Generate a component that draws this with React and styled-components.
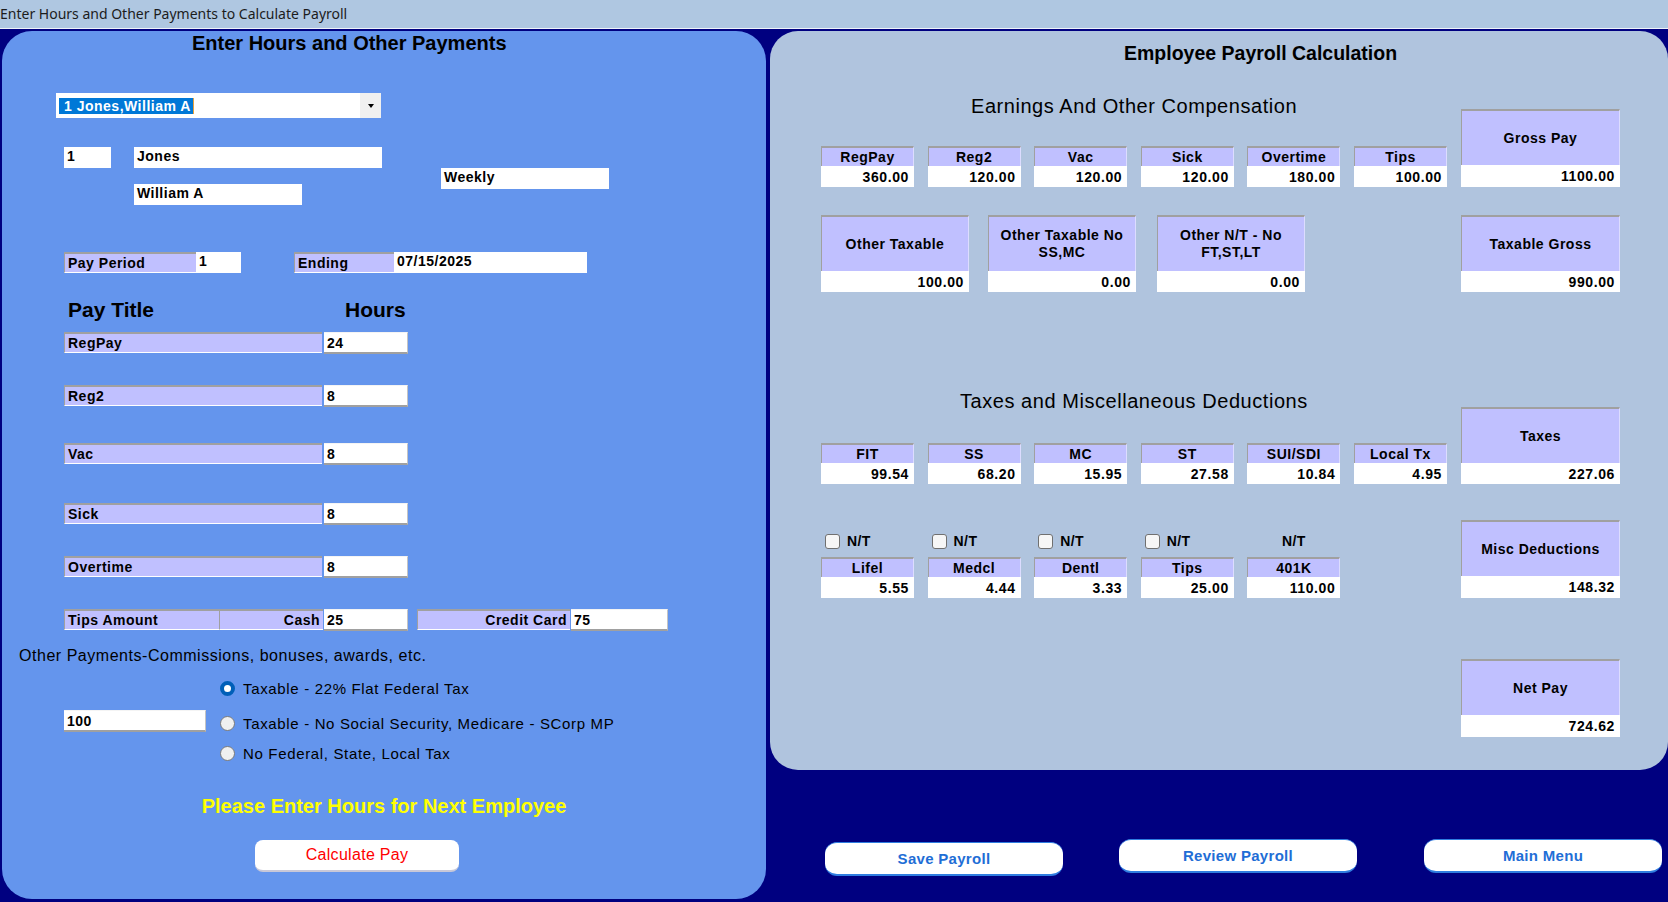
import React from "react";
import styled, { createGlobalStyle } from "styled-components";

const hourRows = [
  { title: "RegPay", hours: "24", mt: 9 },
  { title: "Reg2", hours: "8", mt: 31 },
  { title: "Vac", hours: "8", mt: 36 },
  { title: "Sick", hours: "8", mt: 38 },
  { title: "Overtime", hours: "8", mt: 31 },
];

const otherOptions = [
  { label: "Taxable - 22% Flat Federal Tax", checked: true, mt: 0 },
  { label: "Taxable - No Social Security, Medicare - SCorp MP", checked: false, mt: 15 },
  { label: "No Federal, State, Local Tax", checked: false, mt: 10 },
];

const earnings = [
  { title: "RegPay", value: "360.00" },
  { title: "Reg2", value: "120.00" },
  { title: "Vac", value: "120.00" },
  { title: "Sick", value: "120.00" },
  { title: "Overtime", value: "180.00" },
  { title: "Tips", value: "100.00" },
];

const otherPay = [
  { title: "Other Taxable", value: "100.00", gap: 0 },
  { title: <>Other Taxable No<br />SS,MC</>, value: "0.00", gap: 19 },
  { title: <>Other N/T - No<br />FT,ST,LT</>, value: "0.00", gap: 21 },
];

const taxes = [
  { title: "FIT", value: "99.54" },
  { title: "SS", value: "68.20" },
  { title: "MC", value: "15.95" },
  { title: "ST", value: "27.58" },
  { title: "SUI/SDI", value: "10.84" },
  { title: "Local Tx", value: "4.95" },
];

const deductions = [
  { title: "Lifel", value: "5.55", check: true },
  { title: "Medcl", value: "4.44", check: true },
  { title: "Dentl", value: "3.33", check: true },
  { title: "Tips", value: "25.00", check: true },
  { title: "401K", value: "110.00", check: false },
];

const GlobalStyle = createGlobalStyle`
  html, body {
    margin: 0;
    padding: 0;
    background: #000080;
  }
  body {
    font-family: "Liberation Sans", Arial, sans-serif;
    color: #000;
  }
  * {
    box-sizing: border-box;
  }
`;

const Screen = styled.div`
  width: 1668px;
  height: 902px;
  overflow: hidden;
  background: #000080;
  display: flex;
  flex-direction: column;
`;

const TitleBar = styled.div`
  height: 29px;
  flex-shrink: 0;
  background: #afc7e1;
  border-bottom: 1px solid #eef3f9;
  font-family: "Noto Sans", "Open Sans", sans-serif;
  font-size: 14px;
  line-height: 28px;
  color: #1c1c1c;
  white-space: nowrap;
`;

const Workspace = styled.div`
  display: flex;
  gap: 4px;
  padding: 2px 0 0 2px;
`;

const EntryPanel = styled.div`
  width: 764px;
  height: 868px;
  background: #6495ed;
  border-radius: 30px;
  display: flex;
  flex-direction: column;
  align-items: flex-start;
`;

const PanelTitle = styled.h2`
  margin: ${({ $mt }) => $mt}px 0 0 ${({ $ml }) => $ml}px;
  font-size: ${({ $size }) => $size}px;
  font-weight: bold;
  line-height: 24px;
  white-space: nowrap;
`;

const Combo = styled.div`
  margin: 38px 0 0 54px;
  width: 325px;
  height: 25px;
  background: #fff;
  display: flex;
  align-items: center;
  padding-left: 3px;
`;

const ComboSelection = styled.span`
  width: 135px;
  height: 16px;
  padding-left: 5px;
  background: #0078d7;
  border-right: 1px solid #e9a23b;
  color: #fff;
  font-size: 14px;
  font-weight: bold;
  letter-spacing: 0.5px;
  line-height: 16px;
  white-space: nowrap;
`;

const ComboButton = styled.span`
  margin-left: auto;
  width: 21px;
  height: 100%;
  background: #f0f0f0;
  display: flex;
  align-items: center;
  justify-content: center;
`;

const Caret = styled.span`
  width: 0;
  height: 0;
  border-left: 3.5px solid transparent;
  border-right: 3.5px solid transparent;
  border-top: 4px solid #000;
`;

const EmployeeBlock = styled.div`
  display: flex;
  margin: 29px 0 0 62px;
`;

const NameColumn = styled.div`
  display: flex;
  flex-direction: column;
  gap: 16px;
`;

const NameRow = styled.div`
  display: flex;
  gap: 23px;
  padding-left: ${({ $indent }) => $indent || 0}px;
`;

const Field = styled.div`
  width: ${({ $w }) => $w}px;
  height: 21px;
  flex-shrink: 0;
  background: #fff;
  padding: 1px 3px 0;
  font-size: 14px;
  font-weight: bold;
  letter-spacing: 0.5px;
  line-height: 17px;
  white-space: nowrap;
`;

const FrequencyField = styled(Field)`
  margin: 21px 0 0 59px;
`;

const PeriodRow = styled.div`
  display: flex;
  margin: 47px 0 0 62px;
`;

const Caption = styled.div`
  width: ${({ $w }) => $w}px;
  height: 21px;
  flex-shrink: 0;
  margin-left: ${({ $ml }) => $ml || 0}px;
  background: #c0c0ff;
  border-top: 2px solid #a0a0a0;
  border-left: 1px solid #a0a0a0;
  border-bottom: 1px solid #fff;
  padding: 1px 3px 0;
  text-align: ${({ $align }) => $align || "left"};
  font-size: 14px;
  font-weight: bold;
  letter-spacing: 0.5px;
  line-height: 16px;
  white-space: nowrap;
`;

const ColumnHead = styled.div`
  display: flex;
  margin: 24px 0 0 66px;
`;

const HeadCell = styled.div`
  width: ${({ $w }) => ($w ? `${$w}px` : "auto")};
  font-size: 21px;
  font-weight: bold;
  line-height: 26px;
`;

const HourRow = styled.div`
  display: flex;
  margin: ${({ $mt }) => $mt}px 0 0 62px;
`;

const Entry = styled.div`
  width: ${({ $w }) => $w}px;
  height: 22px;
  flex-shrink: 0;
  margin-left: ${({ $ml }) => $ml || 0}px;
  background: #fff;
  border-top: 1px solid #f4f4f4;
  border-right: 1px solid #c4c4c4;
  border-bottom: 2px solid #a0a0a0;
  padding: 2px 3px 0;
  font-size: 14px;
  font-weight: bold;
  letter-spacing: 0.5px;
  line-height: 16px;
`;

const OtherNote = styled.div`
  margin: 15px 0 0 17px;
  font-size: 16px;
  letter-spacing: 0.53px;
  line-height: 20px;
  white-space: nowrap;
`;

const OtherBlock = styled.div`
  display: flex;
  align-items: center;
  margin: 12px 0 0 62px;
`;

const RadioList = styled.div`
  display: flex;
  flex-direction: column;
  margin-left: 14px;
`;

const RadioRow = styled.div`
  display: flex;
  align-items: center;
  gap: 8px;
  height: 20px;
  margin-top: ${({ $mt }) => $mt}px;
  font-size: 15px;
  letter-spacing: 0.66px;
  white-space: nowrap;
`;

const RadioDot = styled.span`
  width: 15px;
  height: 15px;
  border-radius: 50%;
  flex-shrink: 0;
  background: ${({ $checked }) => ($checked ? "#fff" : "#f0f0f0")};
  border: ${({ $checked }) => ($checked ? "4.5px solid #005fb8" : "1px solid #7a7a7a")};
`;

const Notice = styled.div`
  align-self: stretch;
  margin-top: 31px;
  text-align: center;
  color: #ffff00;
  font-size: 20px;
  font-weight: bold;
  line-height: 24px;
`;

const CalcButton = styled.button`
  margin: 22px 0 0 253px;
  width: 204px;
  height: 32px;
  background: #fff;
  border: none;
  border-bottom: 2px solid #c8c8d8;
  border-radius: 8px;
  color: #ff0000;
  font-family: inherit;
  font-size: 16px;
  letter-spacing: 0.3px;
`;

const RightColumn = styled.div`
  width: 898px;
  display: flex;
  flex-direction: column;
`;

const SummaryPanel = styled.div`
  height: 739px;
  background: #b0c4de;
  border-radius: 28px;
  display: flex;
  flex-direction: column;
  align-items: flex-start;
`;

const Section = styled.div`
  display: flex;
  align-items: flex-end;
  margin: ${({ $mt }) => $mt}px 0 0 51px;
`;

const SectionMain = styled.div`
  width: 626px;
  display: flex;
  flex-direction: column;
`;

const SectionTitle = styled.div`
  margin: 0 0 ${({ $gap }) => $gap}px ${({ $indent }) => $indent}px;
  font-size: 20px;
  letter-spacing: 0.55px;
  line-height: 24px;
  white-space: nowrap;
`;

const BoxRow = styled.div`
  display: flex;
  gap: 13.6px;
`;

const Box = styled.div`
  width: ${({ $w }) => $w}px;
  flex-shrink: 0;
  margin-left: ${({ $ml }) => ($ml === "auto" ? "auto" : `${$ml || 0}px`)};
  display: flex;
  flex-direction: column;
`;

const BoxLabel = styled.div`
  height: ${({ $h }) => $h}px;
  background: #c0c0ff;
  border-top: 2px solid #a0a0a0;
  border-left: 1px solid #a0a0a0;
  border-right: 1px solid #dcdcff;
  display: flex;
  align-items: center;
  justify-content: center;
  text-align: center;
  font-size: 14px;
  font-weight: bold;
  letter-spacing: 0.5px;
  line-height: 17px;
  white-space: nowrap;
`;

const BoxValue = styled.div`
  height: ${({ $h }) => $h || 21}px;
  background: #fff;
  padding: 1px 5px 0 0;
  text-align: right;
  font-size: 14px;
  font-weight: bold;
  letter-spacing: 0.6px;
  line-height: 20px;
`;

const WideRow = styled.div`
  width: 799px;
  display: flex;
  align-items: flex-end;
  margin: 28px 0 0 51px;
`;

const CheckRow = styled.div`
  display: flex;
  gap: 13.6px;
  height: 16px;
  margin-bottom: 8px;
`;

const CheckCell = styled.label`
  width: 93px;
  display: flex;
  align-items: center;
  justify-content: ${({ $center }) => ($center ? "center" : "flex-start")};
  gap: 7px;
  padding-left: ${({ $center }) => ($center ? 0 : 4)}px;
  font-size: 14px;
  font-weight: bold;
  letter-spacing: 0.4px;
`;

const CheckSquare = styled.span`
  width: 15px;
  height: 15px;
  background: #f6f6f6;
  border: 1px solid #707070;
  border-radius: 3px;
`;

const NetWrap = styled.div`
  margin: 61px 0 0 691px;
`;

const ButtonRow = styled.div`
  display: flex;
  align-items: flex-start;
  margin-top: 69px;
  padding-left: 55px;
`;

const NavButton = styled.button`
  width: 238px;
  height: 34px;
  margin: ${({ $drop }) => $drop || 0}px 0 0 ${({ $ml }) => $ml || 0}px;
  background: #fff;
  border: none;
  border-top: 1px solid #2f7de0;
  border-bottom: 2px solid #2f7de0;
  border-radius: 12px;
  color: #1f6ed6;
  font-family: inherit;
  font-size: 15px;
  font-weight: bold;
  letter-spacing: 0.3px;
`;

const SmallBox = ({ title, value }) => (
  <Box $w={93}>
    <BoxLabel $h={20}>{title}</BoxLabel>
    <BoxValue>{value}</BoxValue>
  </Box>
);

const TotalBox = ({ title, value, w = 159, ml = 0, valueH = 22 }) => (
  <Box $w={w} $ml={ml}>
    <BoxLabel $h={56}>{title}</BoxLabel>
    <BoxValue $h={valueH}>{value}</BoxValue>
  </Box>
);

const App = () => (
  <>
    <GlobalStyle />
    <Screen>
      <TitleBar>Enter Hours and Other Payments to Calculate Payroll</TitleBar>
      <Workspace>
        <EntryPanel>
          <PanelTitle $mt={0} $ml={190} $size={20}>
            Enter Hours and Other Payments
          </PanelTitle>
          <Combo>
            <ComboSelection>1 Jones,William A</ComboSelection>
            <ComboButton>
              <Caret />
            </ComboButton>
          </Combo>
          <EmployeeBlock>
            <NameColumn>
              <NameRow>
                <Field $w={47}>1</Field>
                <Field $w={248}>Jones</Field>
              </NameRow>
              <NameRow $indent={70}>
                <Field $w={168}>William A</Field>
              </NameRow>
            </NameColumn>
            <FrequencyField $w={168}>Weekly</FrequencyField>
          </EmployeeBlock>
          <PeriodRow>
            <Caption $w={132}>Pay Period</Caption>
            <Field $w={45}>1</Field>
            <Caption $w={100} $ml={53}>Ending</Caption>
            <Field $w={193}>07/15/2025</Field>
          </PeriodRow>
          <ColumnHead>
            <HeadCell $w={277}>Pay Title</HeadCell>
            <HeadCell>Hours</HeadCell>
          </ColumnHead>
          {hourRows.map((row) => (
            <HourRow key={row.title} $mt={row.mt}>
              <Caption $w={258}>{row.title}</Caption>
              <Entry $w={84} $ml={2}>{row.hours}</Entry>
            </HourRow>
          ))}
          <HourRow $mt={31}>
            <Caption $w={155}>Tips Amount</Caption>
            <Caption $w={104} $align="right">Cash</Caption>
            <Entry $w={84} $ml={1}>25</Entry>
            <Caption $w={153} $ml={9} $align="right">Credit Card</Caption>
            <Entry $w={97} $ml={1}>75</Entry>
          </HourRow>
          <OtherNote>Other Payments-Commissions, bonuses, awards, etc.</OtherNote>
          <OtherBlock>
            <Entry $w={142}>100</Entry>
            <RadioList>
              {otherOptions.map((opt) => (
                <RadioRow key={opt.label} $mt={opt.mt}>
                  <RadioDot $checked={opt.checked} />
                  {opt.label}
                </RadioRow>
              ))}
            </RadioList>
          </OtherBlock>
          <Notice>Please Enter Hours for Next Employee</Notice>
          <CalcButton>Calculate Pay</CalcButton>
        </EntryPanel>

        <RightColumn>
          <SummaryPanel>
            <PanelTitle $mt={10} $ml={354} $size={19.5}>
              Employee Payroll Calculation
            </PanelTitle>

            <Section $mt={29}>
              <SectionMain>
                <SectionTitle $indent={150} $gap={28}>
                  Earnings And Other Compensation
                </SectionTitle>
                <BoxRow>
                  {earnings.map((e) => (
                    <SmallBox key={e.title} title={e.title} value={e.value} />
                  ))}
                </BoxRow>
              </SectionMain>
              <TotalBox title="Gross Pay" value="1100.00" ml={14} />
            </Section>

            <WideRow>
              {otherPay.map((o) => (
                <TotalBox key={o.value + o.gap} title={o.title} value={o.value} w={148} ml={o.gap} valueH={21} />
              ))}
              <TotalBox title="Taxable Gross" value="990.00" ml="auto" valueH={21} />
            </WideRow>

            <Section $mt={97}>
              <SectionMain>
                <SectionTitle $indent={139} $gap={30}>
                  Taxes and Miscellaneous Deductions
                </SectionTitle>
                <BoxRow>
                  {taxes.map((t) => (
                    <SmallBox key={t.title} title={t.title} value={t.value} />
                  ))}
                </BoxRow>
              </SectionMain>
              <TotalBox title="Taxes" value="227.06" ml={14} valueH={21} />
            </Section>

            <Section $mt={36}>
              <SectionMain>
                <CheckRow>
                  {deductions.map((d) => (
                    <CheckCell key={d.title} $center={!d.check}>
                      {d.check && <CheckSquare />}
                      N/T
                    </CheckCell>
                  ))}
                </CheckRow>
                <BoxRow>
                  {deductions.map((d) => (
                    <SmallBox key={d.title} title={d.title} value={d.value} />
                  ))}
                </BoxRow>
              </SectionMain>
              <TotalBox title="Misc Deductions" value="148.32" ml={14} />
            </Section>

            <NetWrap>
              <TotalBox title="Net Pay" value="724.62" />
            </NetWrap>
          </SummaryPanel>

          <ButtonRow>
            <NavButton $drop={3}>Save Payroll</NavButton>
            <NavButton $ml={56}>Review Payroll</NavButton>
            <NavButton $ml={67}>Main Menu</NavButton>
          </ButtonRow>
        </RightColumn>
      </Workspace>
    </Screen>
  </>
);

export default App;
